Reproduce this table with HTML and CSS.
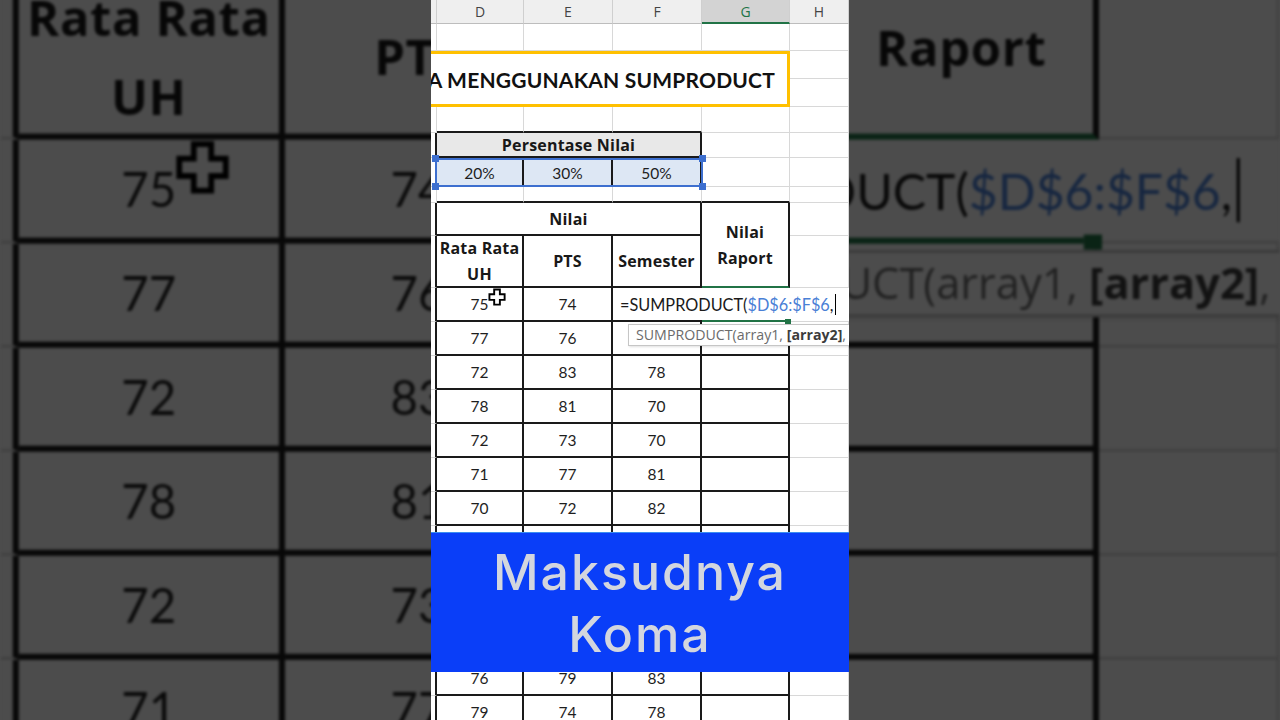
FILE: index.html
```html
<!DOCTYPE html>
<html lang="id">
<head>
<meta charset="utf-8">
<title>Maksudnya Koma - SUMPRODUCT</title>
<link rel="stylesheet" href="styles.css">
</head>
<body>
<div class="stage">
  <div class="backdrop"></div>
  <div class="front">
    <div class="panel">
      <div class="sheet">
        <div class="h"></div><div class="h">D</div><div class="h">E</div><div class="h">F</div><div class="h act">G</div><div class="h">H</div>

        <div class="c"></div><div class="c"></div><div class="c"></div><div class="c"></div><div class="c"></div><div class="c"></div>

        <div class="title">A MENGGUNAKAN SUMPRODUCT</div><div class="c"></div>
        <div class="c"></div>

        <div class="c"></div><div class="c kb"></div><div class="c kb"></div><div class="c kb"></div><div class="c"></div><div class="c"></div>

        <div class="c kr"></div><div class="k ph bold">Persentase Nilai</div><div class="c"></div><div class="c"></div>

        <div class="c kr"></div>
        <div class="sel">
          <div class="pc">20%</div><div class="pc">30%</div><div class="pc">50%</div>
          <span class="frame"><i class="hd tl"></i><i class="hd tr"></i><i class="hd bl"></i><i class="hd br"></i></span>
        </div>
        <div class="c"></div><div class="c"></div>

        <div class="c"></div><div class="c kb"></div><div class="c kb"></div><div class="c kb"></div><div class="c kb"></div><div class="c"></div>

        <div class="c kr"></div><div class="k span3 bold">Nilai</div><div class="k raport bold">Nilai<br>Raport</div><div class="c"></div>
        <div class="c kr"></div><div class="k bold two">Rata Rata<br>UH</div><div class="k bold">PTS</div><div class="k bold">Semester</div><div class="c"></div>

        <div class="c kr"></div>
        <div class="k cur">75<svg class="cross" viewBox="0 0 20 20" width="19" height="19"><path d="M6.5 1.5h6v5h5v6h-5v5h-6v-5h-5v-6h5z" fill="#fff" stroke="#000" stroke-width="2" stroke-linejoin="miter"/></svg></div>
        <div class="k">74</div>
        <div class="edit"><span class="ftxt">=SUMPRODUCT(<span class="ref">$D$6:$F$6</span>,</span><span class="caret"></span><i class="fh"></i>
          <div class="tip">SUMPRODUCT(array1, <b>[array2]</b>, [array3], ...)</div>
        </div>

        <div class="c kr"></div><div class="k">77</div><div class="k">76</div><div class="k"></div><div class="k"></div><div class="c"></div>
        <div class="c kr"></div><div class="k">72</div><div class="k">83</div><div class="k">78</div><div class="k"></div><div class="c"></div>
        <div class="c kr"></div><div class="k">78</div><div class="k">81</div><div class="k">70</div><div class="k"></div><div class="c"></div>
        <div class="c kr"></div><div class="k">72</div><div class="k">73</div><div class="k">70</div><div class="k"></div><div class="c"></div>
        <div class="c kr"></div><div class="k">71</div><div class="k">77</div><div class="k">81</div><div class="k"></div><div class="c"></div>
        <div class="c kr"></div><div class="k">70</div><div class="k">72</div><div class="k">82</div><div class="k"></div><div class="c"></div>
        <div class="c kr"></div><div class="k"></div><div class="k"></div><div class="k"></div><div class="k"></div><div class="c"></div>
        <div class="c kr"></div><div class="k"></div><div class="k"></div><div class="k"></div><div class="k"></div><div class="c"></div>
        <div class="c kr"></div><div class="k"></div><div class="k"></div><div class="k"></div><div class="k"></div><div class="c"></div>
        <div class="c kr"></div><div class="k"></div><div class="k"></div><div class="k"></div><div class="k"></div><div class="c"></div>
        <div class="c kr"></div><div class="k">76</div><div class="k">79</div><div class="k">83</div><div class="k"></div><div class="c"></div>
        <div class="c kr"></div><div class="k">79</div><div class="k">74</div><div class="k">78</div><div class="k"></div><div class="c"></div>
      </div>
      <div class="banner"><span>Maksudnya</span><span>Koma</span></div>
    </div>
  </div>
</div>
<script src="script.js"></script>
</body>
</html>
```
FILE: styles.css
```css
* { box-sizing: border-box; }
html, body { margin: 0; padding: 0; }
body {
  width: 1280px;
  height: 720px;
  overflow: hidden;
  background: #4d4d4d;
  font-family: Lato, "Open Sans", sans-serif;
}
.stage {
  display: grid;
  width: 1280px;
  height: 720px;
  overflow: hidden;
}
.backdrop, .front {
  grid-area: 1 / 1;
  display: flex;
  justify-content: center;
  overflow: hidden;
}
.backdrop { background: #4d4d4d; }
.backdrop .panel {
  transform: scale(3.06);
  transform-origin: 209px 360px;
  filter: brightness(0.3) blur(0.55px);
}
.panel {
  position: relative;
  flex: none;
  width: 418px;
  height: 720px;
  overflow: hidden;
  background: #fff;
}
.sheet {
  display: grid;
  grid-template-columns: 6px 87px 89px 89px 88px 59px;
  grid-template-rows: 24px 27px 28px 28px 26px 25px 29px 16px 33px 52px repeat(13, 34px);
  font-size: 15.5px;
  color: #1e1e1e;
}
.sheet > div, .pc {
  display: flex;
  align-items: center;
  justify-content: center;
}
.h {
  background: #efefef;
  border-right: 1px solid #cfcfcf;
  border-bottom: 1px solid #bdbdbd;
  font-family: "Open Sans", sans-serif;
  font-size: 14px;
  color: #444;
}
.h.act {
  background: #d3d3d3;
  color: #217346;
  border-bottom: 2px solid #217346;
}
.c {
  border-right: 1px solid #d8d8d8;
  border-bottom: 1px solid #d8d8d8;
}
.kb { border-bottom: 2px solid #1a1a1a; }
.kr { border-right: 2px solid #1a1a1a; }
.k {
  border-right: 2px solid #1a1a1a;
  border-bottom: 2px solid #1a1a1a;
}
.bold {
  font-family: "Open Sans", sans-serif;
  font-weight: 700;
  font-size: 16px;
  letter-spacing: 0.2px;
  color: #181818;
}
.two, .raport { text-align: center; line-height: 26px; }
.title {
  grid-column: span 5;
  grid-row: span 2;
  border: 3px solid #ffc000;
  border-left: none;
  justify-content: flex-end !important;
  padding-right: 12px;
  overflow: hidden;
  white-space: nowrap;
  font-weight: 700;
  font-size: 21px;
  color: #111;
  letter-spacing: 0.2px;
}
.ph {
  grid-column: span 3;
  background: #e8e8e8;
}
.span3 { grid-column: span 3; }
.raport {
  grid-row: span 2;
  border-bottom: 2px solid #217346;
}
.sel {
  grid-column: span 3;
  position: relative;
  background: #dde7f4;
}
.pc {
  flex: none;
  height: 100%;
  border-right: 2px solid #1a1a1a;
  width: 89px;
}
.pc:first-child { width: 87px; }
.frame {
  position: absolute;
  left: -2px;
  top: 0;
  right: -1px;
  bottom: 0;
  border: 2px solid #3d6fcf;
}
.hd {
  position: absolute;
  width: 7px;
  height: 7px;
  background: #3d6fcf;
}
.hd.tl { left: -5px; top: -5px; }
.hd.tr { right: -5px; top: -5px; }
.hd.bl { left: -5px; bottom: -5px; }
.hd.br { right: -5px; bottom: -5px; }
.cur { position: relative; }
.cross {
  position: absolute;
  left: 51px;
  top: 0px;
}
.edit {
  grid-column: span 3;
  position: relative;
  justify-content: flex-start !important;
  padding-left: 7px;
  border-bottom: 1px solid #d8d8d8;
  font-size: 16.3px;
  white-space: nowrap;
}
.edit::before {
  content: "";
  position: absolute;
  left: 0;
  bottom: -1px;
  width: 89px;
  height: 2px;
  background: #1a1a1a;
}
.edit::after {
  content: "";
  position: absolute;
  left: 89px;
  bottom: -1px;
  width: 83px;
  height: 2px;
  background: #217346;
}
.fh {
  position: absolute;
  left: 172px;
  bottom: -3px;
  width: 6px;
  height: 5px;
  background: #217346;
  z-index: 1;
}
.ftxt { color: #1a1a1a; }
.ref { color: #4a80d6; }
.caret {
  display: inline-block;
  width: 1px;
  height: 21px;
  background: #000;
  margin-left: 1px;
}
.tip {
  position: absolute;
  left: 15px;
  top: calc(100% + 3px);
  height: 22px;
  padding: 0 7px;
  background: #fff;
  border: 1px solid #c6c6c6;
  box-shadow: 1px 1px 2px rgba(0,0,0,0.12);
  font-family: "Open Sans", sans-serif;
  font-size: 14.2px;
  line-height: 20px;
  color: #6b6b6b;
  white-space: nowrap;
  z-index: 2;
}
.tip b { color: #3c3c3c; }
.banner {
  position: absolute;
  left: 0;
  right: 0;
  top: 532px;
  height: 140px;
  background: #0a3ef8;
  border-top: 1px solid #3b8ef2;
  display: flex;
  flex-direction: column;
  align-items: center;
  justify-content: center;
  font-family: Inter, Lato, sans-serif;
  font-weight: 500;
  font-size: 50px;
  line-height: 62px;
  letter-spacing: 2px;
  color: #d3d6de;
}
```
FILE: script.js
```js
(function () {
  var panel = document.querySelector('.front .panel');
  var backdrop = document.querySelector('.backdrop');
  if (panel && backdrop) {
    var copy = panel.cloneNode(true);
    copy.setAttribute('aria-hidden', 'true');
    backdrop.appendChild(copy);
  }
})();
```
